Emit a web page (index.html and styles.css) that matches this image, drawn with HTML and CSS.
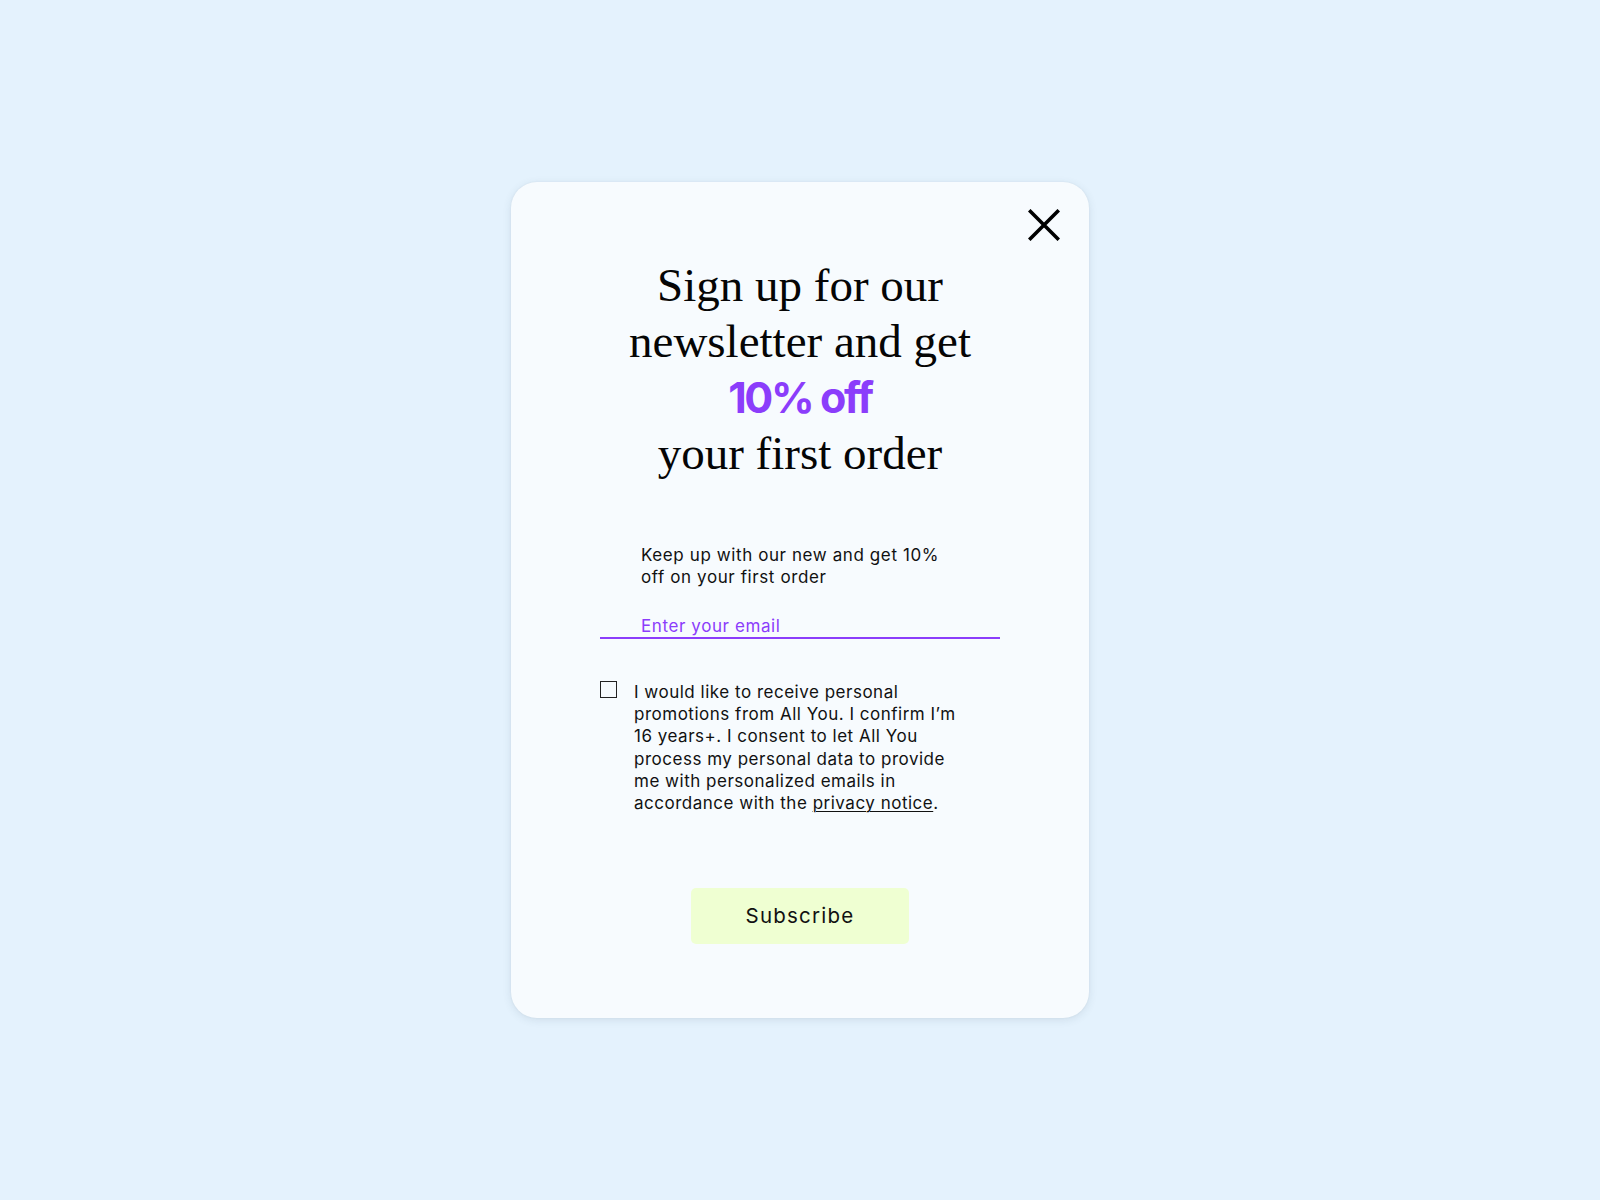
FILE: index.html
```html
<!DOCTYPE html>
<html lang="en">
<head>
<meta charset="utf-8">
<title>Newsletter sign up</title>
<link rel="stylesheet" href="styles.css">
</head>
<body>
<main class="page">
  <section class="card">
    <button class="close" aria-label="Close">
      <svg viewBox="0 0 32 32" width="32" height="32"><path d="M2.5 2.5 L29.5 29.5 M29.5 2.5 L2.5 29.5" stroke="#000" stroke-width="3.6" stroke-linecap="square" fill="none"/></svg>
    </button>
    <h1 class="title">
      <span class="line">Sign up for our</span>
      <span class="line">newsletter and get</span>
      <span class="line accent">10% off</span>
      <span class="line">your first order</span>
    </h1>
    <form class="form">
      <p class="lead">Keep up with our new and get 10% off on your first order</p>
      <label class="email">
        <input type="email" placeholder="Enter your email">
      </label>
      <label class="consent">
        <span class="box"></span>
        <span class="consent-text">I would like to receive personal promotions from All You. I confirm I’m 16 years+. I consent to let All You process my personal data to provide me with personalized emails in accordance with the <a href="#">privacy notice</a>.</span>
      </label>
      <button type="button" class="subscribe">Subscribe</button>
    </form>
  </section>
</main>
</body>
</html>
```

FILE: styles.css
```css
* { box-sizing: border-box; }
html, body { margin: 0; padding: 0; }
body {
  background: #e4f2fd;
  width: 1600px;
  height: 1200px;
  font-family: Inter, "Liberation Sans", sans-serif;
  color: #111;
}
.page {
  display: flex;
  justify-content: center;
  padding-top: 182px;
}
.card {
  position: relative;
  width: 578px;
  height: 836px;
  background: #f7fbfe;
  border-radius: 26px;
  box-shadow: 0 2px 8px rgba(60, 80, 100, 0.12), 0 0 2px rgba(60, 80, 100, 0.08);
  display: flex;
  flex-direction: column;
  align-items: center;
  padding-top: 75px;
}
.close {
  position: absolute;
  top: 27px;
  right: 29px;
  width: 32px;
  height: 32px;
  padding: 0;
  border: 0;
  background: none;
  display: block;
}
.close svg { display: block; }
.title {
  margin: 0;
  font-family: "Liberation Serif", "Times New Roman", serif;
  font-weight: 400;
  font-size: 47px;
  line-height: 56px;
  text-align: center;
  color: #050505;
  display: flex;
  flex-direction: column;
  align-items: center;
}
.accent {
  font-family: Inter, "Liberation Sans", sans-serif;
  font-weight: 700;
  font-size: 43px;
  letter-spacing: -0.055em;
  color: #8b3dfb;
}
.form {
  width: 400px;
  display: flex;
  flex-direction: column;
  margin-top: 63px;
}
.lead {
  margin: 0;
  padding-left: 41px;
  width: 350px;
  font-size: 17px;
  letter-spacing: 0.035em;
  line-height: 22.4px;
}
.email {
  display: block;
  margin-top: 26px;
  border-bottom: 2px solid #8b3dfb;
}
.email input {
  display: block;
  width: 100%;
  border: 0;
  outline: 0;
  background: transparent;
  padding: 0 0 0 41px;
  height: 22px;
  font-family: inherit;
  font-size: 17px;
  letter-spacing: 0.035em;
  color: #8b3dfb;
}
.email input::placeholder { color: #8b3dfb; opacity: 1; }
.consent {
  display: flex;
  gap: 17px;
  margin-top: 42px;
  align-items: flex-start;
}
.box {
  flex: none;
  width: 17px;
  height: 17px;
  border: 1.5px solid #222;
}
.consent-text {
  width: 326px;
  font-size: 17px;
  letter-spacing: 0.03em;
  line-height: 22.3px;
}
.consent-text a { color: #111; text-decoration: underline; text-underline-offset: 2px; text-decoration-thickness: 1px; }
.subscribe {
  align-self: center;
  margin-top: 73px;
  width: 218px;
  height: 56px;
  border: 0;
  border-radius: 5px;
  background: #efffd2;
  font-family: inherit;
  font-size: 20.5px;
  color: #111;
  letter-spacing: 0.06em;
}
```
